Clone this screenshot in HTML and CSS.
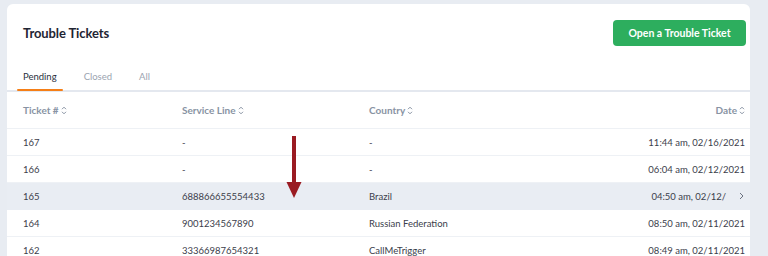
FILE: index.html
```html
<!DOCTYPE html>
<html>
<head>
<meta charset="utf-8">
<link rel="stylesheet" href="styles.css">
</head>
<body>
<div class="card">
  <div class="head">
    <h1 class="title">Trouble Tickets</h1>
    <button class="btn">Open a Trouble Ticket</button>
  </div>
  <div class="tabs">
    <div class="tab active">Pending</div>
    <div class="tab">Closed</div>
    <div class="tab">All</div>
  </div>
  <div class="table">
    <div class="row th">
      <div class="c">Ticket #<svg class="sort" viewBox="0 0 6 9"><path d="M1 3.2 3 1.2 5 3.2M1 5.8 3 7.8 5 5.8"/></svg></div>
      <div class="c">Service Line<svg class="sort" viewBox="0 0 6 9"><path d="M1 3.2 3 1.2 5 3.2M1 5.8 3 7.8 5 5.8"/></svg></div>
      <div class="c">Country<svg class="sort" viewBox="0 0 6 9"><path d="M1 3.2 3 1.2 5 3.2M1 5.8 3 7.8 5 5.8"/></svg></div>
      <div class="c r">Date<svg class="sort" viewBox="0 0 6 9"><path d="M1 3.2 3 1.2 5 3.2M1 5.8 3 7.8 5 5.8"/></svg></div>
    </div>
    <div class="row">
      <div class="c">167</div><div class="c">-</div><div class="c">-</div><div class="c r">11:44 am, 02/16/2021</div>
    </div>
    <div class="row">
      <div class="c">166</div><div class="c">-</div><div class="c">-</div><div class="c r">06:04 am, 02/12/2021</div>
    </div>
    <div class="row hover">
      <div class="c">165</div><div class="c">688866655554433</div><div class="c">Brazil</div><div class="c r">04:50 am, 02/12/<svg class="chev" viewBox="0 0 5 8"><path d="M1 1 4 4 1 7"/></svg></div>
    </div>
    <div class="row">
      <div class="c">164</div><div class="c">9001234567890</div><div class="c">Russian Federation</div><div class="c r">08:50 am, 02/11/2021</div>
    </div>
    <div class="row">
      <div class="c">162</div><div class="c">33366987654321</div><div class="c">CallMeTrigger</div><div class="c r">08:49 am, 02/11/2021</div>
    </div>
  </div>
  <svg class="arrow" viewBox="0 0 16 62"><path d="M6 0h4v46h5.5L8 62 0.5 46H6z"/></svg>
</div>
</body>
</html>
```
FILE: styles.css
```css
html, body {
  margin: 0;
  padding: 0;
  height: 256px;
  overflow: hidden;
  background: #e8ecf2;
  font-family: Lato, "Liberation Sans", sans-serif;
}
body {
  padding: 4px 18px 0 7px;
}
.card {
  position: relative;
  background: #fff;
  border-radius: 6px 6px 0 0;
  height: 300px;
}
.head {
  display: flex;
  align-items: center;
  justify-content: space-between;
  padding: 16px 4px 0 16px;
  height: 26px;
}
.title {
  margin: 0;
  font-size: 13px;
  font-weight: 700;
  color: #1f2533;
  letter-spacing: -0.1px;
}
.btn {
  height: 26px;
  width: 133px;
  border: 0;
  border-radius: 4px;
  background: #2dae5e;
  color: #fff;
  font-family: Lato, "Liberation Sans", sans-serif;
  font-size: 10.5px;
  font-weight: 700;
  padding: 0;
}
.tabs {
  display: flex;
  gap: 15px;
  padding: 20px 0 0 10px;
  border-bottom: 2px solid #e4e8ef;
}
.tab {
  position: relative;
  padding: 5px 6px 8px;
  font-size: 9.5px;
  color: #9ba4b1;
}
.tab.active {
  color: #2a303d;
}
.tab.active::after {
  content: "";
  position: absolute;
  left: 0;
  right: 0;
  bottom: -1px;
  height: 2px;
  border-radius: 2px;
  background: #f57f17;
}
.row {
  display: grid;
  grid-template-columns: 159px 187px 1fr auto;
  align-items: center;
  height: 26px;
  padding: 0 5px 0 16px;
  border-bottom: 1px solid #eef1f5;
  font-size: 9.5px;
  color: #3b404b;
}
.row.th {
  height: 36px;
  font-size: 10px;
  font-weight: 700;
  color: #8893a3;
}
.row.hover {
  background: #e9edf3;
  border-bottom-color: #e9edf3;
}
.c {
  display: flex;
  align-items: center;
  white-space: nowrap;
}
.c.r {
  justify-content: flex-end;
}
.sort {
  width: 6px;
  height: 9px;
  margin-left: 2px;
  fill: none;
  stroke: #8893a3;
  stroke-width: 1;
}
.chev {
  width: 5px;
  height: 8px;
  margin: 0 1px 0 13px;
  fill: none;
  stroke: #6b7280;
  stroke-width: 1;
}
.arrow {
  position: absolute;
  left: 279px;
  top: 132px;
  width: 16px;
  height: 62px;
  fill: #9a1b22;
}
```
